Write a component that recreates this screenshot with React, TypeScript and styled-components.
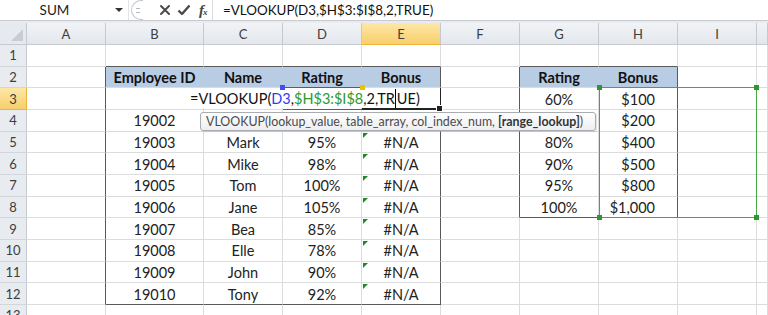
import React from "react";
import styled, { createGlobalStyle, css } from "styled-components";

const GlobalStyle = createGlobalStyle`
  html, body {
    margin: 0;
    padding: 0;
    background: #ffffff;
    overflow: hidden;
  }
  body {
    font-family: Lato, "Liberation Sans", sans-serif;
  }
`;

// column widths: row header, A..I, and the cut off J
const COLS = [27, 79, 98, 79, 79, 79, 79, 79, 79, 79, 11];
const LETTERS = ["A", "B", "C", "D", "E", "F", "G", "H", "I", ""];
const HEAD_H = 22;
const ROW_H = 21.67;
const ROWS = 13;

const colX = (c: number) => COLS.slice(0, c).reduce((a, b) => a + b, 0);
const rowY = (r: number) => HEAD_H + (r - 1) * ROW_H;

const GRID = "#dadcdd";
const DARK = "#5a5a5a";
const BLUE_FILL = "#b8cce4";

const Page = styled.div`
  width: 768px;
  height: 315px;
  display: flex;
  flex-direction: column;
  background: #e9ebee;
`;

const FormulaBar = styled.div`
  height: 22px;
  display: flex;
  align-items: stretch;
  background: #ffffff;
  border-bottom: 1px solid #c7cbd1;
  box-sizing: border-box;
  margin-bottom: 2px;
`;

const NameBox = styled.div`
  width: 129px;
  display: flex;
  align-items: center;
  font-size: 13.5px;
  color: #222;
  box-sizing: border-box;
  border-right: 1px solid #e2e4e7;
`;

const NameText = styled.span`
  flex: 1;
  text-align: center;
  padding-right: 6px;
`;

const DropArrow = styled.span`
  width: 0;
  height: 0;
  border-left: 4px solid transparent;
  border-right: 4px solid transparent;
  border-top: 4px solid #333;
  margin-right: 5px;
`;

const ButtonStrip = styled.div`
  width: 84px;
  display: flex;
  align-items: center;
  box-sizing: border-box;
  border-right: 1px solid #d6d9de;
`;

const Grip = styled.div`
  width: 12px;
  height: 18px;
  margin-left: 2px;
  border: 1px solid #c3c7cc;
  border-right: none;
  border-radius: 10px 0 0 10px;
  display: flex;
  align-items: center;
  justify-content: center;
  &::after {
    content: "";
    width: 4px;
    height: 3px;
    border-top: 1px solid #b5b9be;
    border-bottom: 1px solid #b5b9be;
  }
`;

const BarIcon = styled.span<{ $gap?: number }>`
  width: 20px;
  display: flex;
  align-items: center;
  justify-content: center;
  margin-left: ${(p) => p.$gap ?? 0}px;
`;

const FxText = styled.span`
  font-family: "Liberation Serif", "DejaVu Serif", serif;
  font-style: italic;
  font-weight: bold;
  font-size: 15px;
  color: #444;
  letter-spacing: -1px;
  small {
    font-size: 9px;
  }
`;

const FormulaInput = styled.div`
  flex: 1;
  display: flex;
  align-items: center;
  padding-left: 10px;
  font-size: 13.4px;
  color: #111;
  white-space: nowrap;
`;

const Sheet = styled.div`
  position: relative;
  display: grid;
  grid-template-columns: ${COLS.map((w) => `${w}px`).join(" ")};
  grid-template-rows: ${HEAD_H}px repeat(${ROWS}, ${ROW_H}px);
  background: #ffffff;
`;

const headerBase = css`
  display: flex;
  align-items: center;
  justify-content: center;
  box-sizing: border-box;
  font-size: 13px;
  color: #3d3d3d;
  border-right: 1px solid #c5cad1;
  border-bottom: 1px solid #c5cad1;
`;

const Corner = styled.div`
  ${headerBase};
  background: #e6e9ee;
  position: relative;
  &::after {
    content: "";
    position: absolute;
    right: 3px;
    bottom: 3px;
    border-left: 12px solid transparent;
    border-bottom: 12px solid #c9ccd1;
  }
`;

const ColHead = styled.div<{ $active?: boolean }>`
  ${headerBase};
  background: ${(p) =>
    p.$active
      ? "linear-gradient(#fde7a8, #f7cf6c)"
      : "linear-gradient(#f1f3f6, #e3e7ec)"};
  border-bottom-color: ${(p) => (p.$active ? "#f0b339" : "#c5cad1")};
`;

const RowHead = styled.div<{ $active?: boolean }>`
  ${headerBase};
  background: ${(p) =>
    p.$active ? "linear-gradient(#fde7a8, #f7cf6c)" : "#e8ebef"};
  border-right-color: ${(p) => (p.$active ? "#f0b339" : "#c5cad1")};
  border-bottom-color: ${(p) => (p.$active ? "#f0b339" : "#d3d7dc")};
`;

const Cell = styled.div<{
  $fill?: string;
  $bold?: boolean;
  $align?: "center" | "right";
  $darkRight?: boolean;
  $darkBottom?: boolean;
  $flag?: boolean;
}>`
  position: relative;
  box-sizing: border-box;
  display: flex;
  align-items: center;
  justify-content: ${(p) => (p.$align === "right" ? "flex-end" : "center")};
  padding-right: ${(p) => (p.$align === "right" ? "22px" : "0")};
  padding-top: 1px;
  background: ${(p) => p.$fill ?? "#ffffff"};
  border-right: 1px solid
    ${(p) => (p.$darkRight ? DARK : p.$fill ?? GRID)};
  border-bottom: 1px solid ${(p) => (p.$darkBottom ? DARK : GRID)};
  font-size: 14.5px;
  font-weight: ${(p) => (p.$bold ? 700 : 400)};
  color: ${(p) => (p.$bold ? "#111" : "#222")};
  white-space: nowrap;
  ${(p) =>
    p.$flag &&
    css`
      &::before {
        content: "";
        position: absolute;
        left: 1px;
        top: 1px;
        border-top: 5px solid #1f8a1f;
        border-right: 5px solid transparent;
      }
    `}
`;

const EditBox = styled.div`
  position: absolute;
  background: #ffffff;
  display: flex;
  align-items: center;
  padding-left: 83px;
  box-sizing: border-box;
  font-size: 14.5px;
  color: #111;
  white-space: nowrap;
`;

const Ref = styled.span<{ $color: string }>`
  color: ${(p) => p.$color};
`;

const Caret = styled.span`
  display: inline-block;
  width: 1px;
  height: 19px;
  background: #000;
  vertical-align: middle;
  margin: 0 0.5px;
`;

const ActiveCell = styled.div`
  position: absolute;
  box-sizing: border-box;
  border-right: 1px solid #222;
  border-bottom: 2px solid #222;
  &::after {
    content: "";
    position: absolute;
    right: -3px;
    bottom: -4px;
    width: 5px;
    height: 5px;
    background: #222;
    border: 1px solid #fff;
  }
`;

const RangeBox = styled.div<{ $color: string; $sides?: "tb" | "all" }>`
  position: absolute;
  box-sizing: border-box;
  border: 1px solid ${(p) => p.$color};
  ${(p) =>
    p.$sides === "tb" &&
    css`
      border-left: none;
      border-right: none;
    `}
`;

const Handle = styled.span<{ $color: string; $x: "l" | "r"; $y: "t" | "b" }>`
  position: absolute;
  width: 5px;
  height: 5px;
  background: ${(p) => p.$color};
  ${(p) => (p.$x === "l" ? "left: -3px;" : "right: -3px;")}
  ${(p) => (p.$y === "t" ? "top: -3px;" : "bottom: -3px;")}
`;

const Tip = styled.div`
  position: absolute;
  box-sizing: border-box;
  display: flex;
  align-items: center;
  padding-left: 5px;
  border: 1px solid #a9acb0;
  border-radius: 3px;
  background: linear-gradient(#ffffff, #eceef1);
  box-shadow: 1px 1px 1px rgba(0, 0, 0, 0.12);
  font-size: 12.4px;
  color: #4a4a4a;
  white-space: nowrap;
  b {
    font-weight: 700;
    color: #333;
  }
`;

type CellData = {
  text?: string;
  bold?: boolean;
  fill?: string;
  align?: "center" | "right";
  flag?: boolean;
};

const employees = [
  ["19002", "", "", ""],
  ["19003", "Mark", "95%", "#N/A"],
  ["19004", "Mike", "98%", "#N/A"],
  ["19005", "Tom", "100%", "#N/A"],
  ["19006", "Jane", "105%", "#N/A"],
  ["19007", "Bea", "85%", "#N/A"],
  ["19008", "Elle", "78%", "#N/A"],
  ["19009", "John", "90%", "#N/A"],
  ["19010", "Tony", "92%", "#N/A"],
];

const rates = [
  ["60%", "$100"],
  ["", "$200"],
  ["80%", "$400"],
  ["90%", "$500"],
  ["95%", "$800"],
  ["100%", "$1,000"],
];

// table ranges: [firstCol, lastCol, firstRow, lastRow] (A = 1)
const TABLES = [
  [2, 5, 2, 12],
  [7, 8, 2, 8],
];

const cellAt = (r: number, c: number): CellData => {
  if (r === 2 && c >= 2 && c <= 5) {
    return {
      text: ["Employee ID", "Name", "Rating", "Bonus"][c - 2],
      bold: true,
      fill: BLUE_FILL,
    };
  }
  if (r === 2 && (c === 7 || c === 8)) {
    return { text: c === 7 ? "Rating" : "Bonus", bold: true, fill: BLUE_FILL };
  }
  if (r >= 4 && r <= 12 && c >= 2 && c <= 5) {
    return { text: employees[r - 4][c - 2], flag: c === 5 && r >= 5 };
  }
  if (r >= 3 && r <= 8 && (c === 7 || c === 8)) {
    return {
      text: rates[r - 3][c - 7],
      align: c === 8 ? "right" : "center",
    };
  }
  return {};
};

const isDarkRight = (r: number, c: number) =>
  TABLES.some(
    ([c0, c1, r0, r1]) => r >= r0 && r <= r1 && (c === c1 || c + 1 === c0)
  );

const isDarkBottom = (r: number, c: number) =>
  TABLES.some(
    ([c0, c1, r0, r1]) => c >= c0 && c <= c1 && (r === r1 || r + 1 === r0)
  );

const XIcon = () => (
  <svg width="12" height="12" viewBox="0 0 12 12">
    <path d="M2 2 L10 10 M10 2 L2 10" stroke="#4a4a4a" strokeWidth="2" strokeLinecap="round" />
  </svg>
);

const CheckIcon = () => (
  <svg width="14" height="12" viewBox="0 0 14 12">
    <path d="M1.5 6.5 L5 10 L12.5 1.5" stroke="#4a4a4a" strokeWidth="2.4" fill="none" strokeLinejoin="round" />
  </svg>
);

export default function App() {
  const rows = Array.from({ length: ROWS }, (_, i) => i + 1);

  return (
    <>
      <GlobalStyle />
      <Page>
        <FormulaBar>
          <NameBox>
            <NameText>SUM</NameText>
            <DropArrow />
          </NameBox>
          <ButtonStrip>
            <Grip />
            <BarIcon $gap={13}>
              <XIcon />
            </BarIcon>
            <BarIcon>
              <CheckIcon />
            </BarIcon>
            <BarIcon>
              <FxText>
                f<small>x</small>
              </FxText>
            </BarIcon>
          </ButtonStrip>
          <FormulaInput>=VLOOKUP(D3,$H$3:$I$8,2,TRUE)</FormulaInput>
        </FormulaBar>

        <Sheet>
          <Corner />
          {LETTERS.map((l, i) => (
            <ColHead key={`h${i}`} $active={l === "E"}>
              {l}
            </ColHead>
          ))}

          {rows.map((r) => (
            <React.Fragment key={r}>
              <RowHead $active={r === 3}>{r}</RowHead>
              {LETTERS.map((_, i) => {
                const c = i + 1;
                const d = cellAt(r, c);
                return (
                  <Cell
                    key={c}
                    $fill={d.fill}
                    $bold={d.bold}
                    $align={d.align}
                    $flag={d.flag}
                    $darkRight={isDarkRight(r, c)}
                    $darkBottom={isDarkBottom(r, c)}
                  >
                    {d.text}
                  </Cell>
                );
              })}
            </React.Fragment>
          ))}

          <EditBox
            style={{
              left: colX(2) + 1,
              top: rowY(3),
              width: colX(6) - colX(2) - 1,
              height: ROW_H - 2,
            }}
          >
            =VLOOKUP(<Ref $color="#2f3df0">D3</Ref>,
            <Ref $color="#2e9a2e">$H$3:$I$8</Ref>,2,TR
            <Caret />
            UE)
          </EditBox>

          <RangeBox
            $color="#3f52f0"
            $sides="tb"
            style={{ left: colX(4), top: rowY(3) - 1, width: COLS[4], height: ROW_H + 1 }}
          >
            <Handle $color="#3f52f0" $x="l" $y="t" />
            <Handle $color="#e8c400" $x="r" $y="t" />
          </RangeBox>

          <ActiveCell
            style={{ left: colX(5), top: rowY(3), width: COLS[5], height: ROW_H }}
          />

          <RangeBox
            $color="#44a744"
            style={{
              left: colX(8),
              top: rowY(3) - 1,
              width: colX(10) - colX(8),
              height: ROW_H * 6 + 1,
            }}
          >
            <Handle $color="#2e962e" $x="l" $y="t" />
            <Handle $color="#2e962e" $x="r" $y="t" />
            <Handle $color="#2e962e" $x="l" $y="b" />
            <Handle $color="#2e962e" $x="r" $y="b" />
          </RangeBox>

          <Tip style={{ left: 200, top: rowY(4) + 2, width: 396, height: 19 }}>
            VLOOKUP(lookup_value, table_array, col_index_num,&nbsp;
            <b>[range_lookup]</b>)
          </Tip>
        </Sheet>
      </Page>
    </>
  );
}
